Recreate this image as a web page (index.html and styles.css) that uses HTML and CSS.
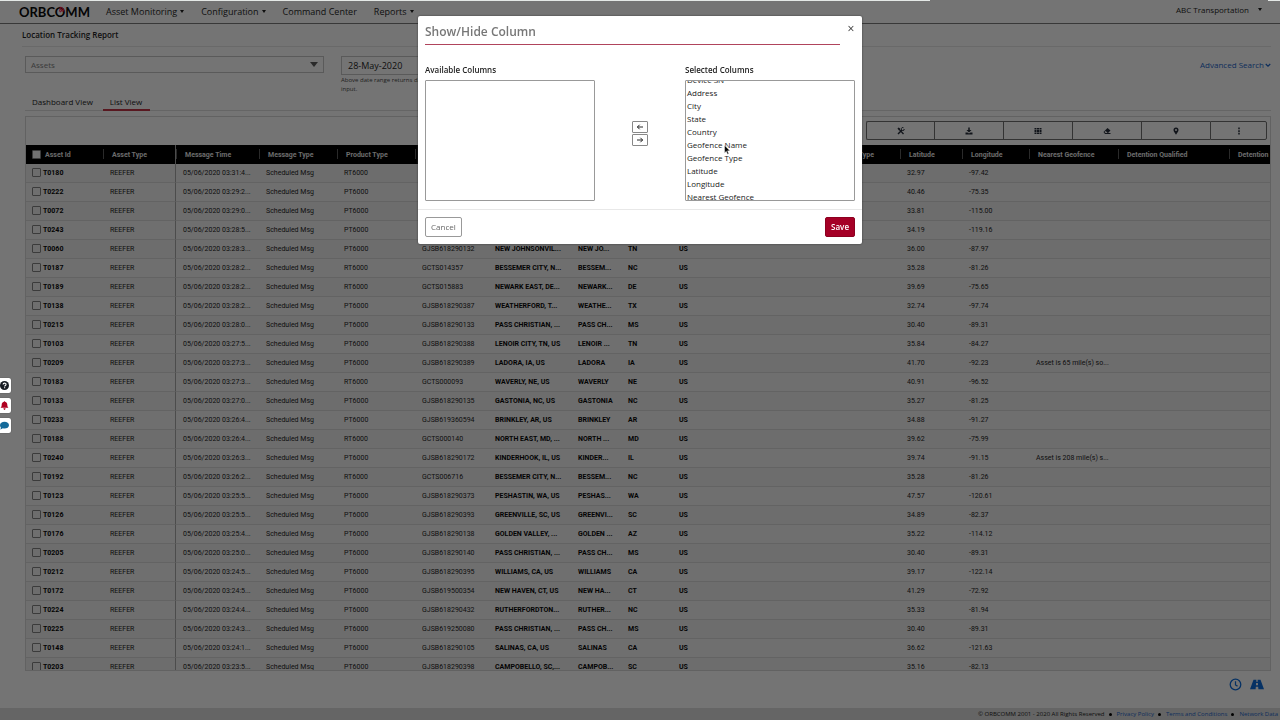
FILE: index.html
```html
<!DOCTYPE html>
<html lang="en">
<head>
<meta charset="utf-8">
<title>Location Tracking Report</title>
<link rel="stylesheet" href="styles.css">
</head>
<body>
<div class="app">
  <header class="topbar">
    <a class="logo" href="#">ORBC<span class="logo-o">O<svg class="logo-mark" viewBox="0 0 12 12"><path d="M5 3.500Q8.500 3.500 8.500 7M5 5.500Q6.500 5.500 6.500 7.500M5.500 1.500Q10.500 1.500 10.500 6.500" fill="none" stroke="#e0103a" stroke-width="1.400"/></svg></span>MM</a>
    <nav class="nav">
      <a href="#">Asset Monitoring<i class="caret"></i></a>
      <a href="#">Configuration<i class="caret"></i></a>
      <a href="#">Command Center</a>
      <a href="#">Reports<i class="caret"></i></a>
    </nav>
    <a class="account" href="#">ABC Transportation<i class="caret"></i></a>
  </header>

  <main class="main">
    <h1 class="title">Location Tracking Report</h1>
    <div class="filters">
      <button class="assets" type="button">Assets<i class="arrow"></i></button>
      <div class="date">
        <input class="date-input" type="text" value="28-May-2020" aria-label="Start date">
        <p class="hint">Above date range returns data without asset<br>input.</p>
      </div>
      <a class="advanced" href="#">Advanced Search<svg viewBox="0 0 8 6" width="6" height="5"><path d="M1 1l3 3 3-3" fill="none" stroke="currentColor" stroke-width="1.600"/></svg></a>
    </div>
    <div class="tabs">
      <a class="tab" href="#">Dashboard View</a>
      <a class="tab active" href="#">List View</a>
    </div>

    <section class="panel">
      <div class="tools">
        <button type="button" aria-label="Settings"><svg viewBox="0 0 16 16"><path d="M1 3l2-2 3 2v2l8 8-2 2-7-8H4z" fill="currentColor"/><path d="M2 14l8-8" stroke="currentColor" stroke-width="3"/><path d="M13 1.500A3 3 0 1 0 14.500 4" fill="none" stroke="currentColor" stroke-width="2"/></svg></button>
        <button type="button" aria-label="Download"><svg viewBox="0 0 16 16"><path d="M6.500 1h3v5H13l-5 5-5-5h3.500zM1 11h4l3 2 3-2h4v4H1z" fill="currentColor"/></svg></button>
        <button type="button" aria-label="Columns"><svg viewBox="0 0 16 16"><path d="M1 2h4v3H1zM6 2h4v3H6zM11 2h4v3h-4zM1 6h4v4H1zM6 6h4v4H6zM11 6h4v4h-4zM1 11h4v3H1zM6 11h4v3H6zM11 11h4v3h-4z" fill="currentColor"/></svg></button>
        <button type="button" aria-label="Clear"><svg viewBox="0 0 16 16"><path d="M9 2l6 5-5 5h5v2H4L1 10zM5 8l-2 2 2 2h3l1-1z" fill="currentColor" fill-rule="evenodd"/></svg></button>
        <button type="button" aria-label="Map"><svg viewBox="0 0 16 16"><path d="M8 1a5 5 0 0 1 5 5c0 3-3 6-5 9.500C6 12 3 9 3 6a5 5 0 0 1 5-5zm0 3a2 2 0 1 0 0 4 2 2 0 0 0 0-4z" fill="currentColor" fill-rule="evenodd"/></svg></button>
        <button type="button" aria-label="More"><svg viewBox="0 0 16 16"><path d="M6.500 1h3v3.500h-3zM6.500 6.300h3v3.500h-3zM6.500 11.600h3V15h-3z" fill="currentColor"/></svg></button>
      </div>
      <div class="grid-wrap">
        <table class="grid">
          <colgroup>
            <col class="w77"><col class="w73"><col class="w83"><col class="w78"><col class="w78"><col class="w73"><col class="w83"><col class="w50"><col class="w51"><col class="w68"><col class="w78"><col class="w82"><col class="w62"><col class="w67"><col class="w89"><col class="w111"><col class="w88">
          </colgroup>
          <thead>
            <tr><th><input class="check" type="checkbox" aria-label="Select all">Asset Id</th><th>Asset Type</th><th>Message Time</th><th>Message Type</th><th>Product Type</th><th>Device SN</th><th>Address</th><th>City</th><th>State</th><th>Country</th><th>Geofence Name</th><th>Geofence Type</th><th>Latitude</th><th>Longitude</th><th>Nearest Geofence</th><th>Detention Qualified</th><th>Detention</th></tr>
          </thead>
          <tbody id="rows"></tbody>
        </table>
      </div>
    </section>
    <div class="status">
      <svg viewBox="0 0 16 16" width="13" height="13"><circle cx="8" cy="8" r="6.500" fill="none" stroke="currentColor" stroke-width="1.600"/><path d="M8 4v4.500l2.500 1.500" fill="none" stroke="currentColor" stroke-width="1.500"/></svg>
      <svg viewBox="0 0 18 14" width="14" height="11"><path d="M4.500 1h3.700L8 3.500h2L9.800 1h3.700L18 13h-7.200l-.3-3h-3l-.3 3H0zM7.900 5l-.3 3h2.800l-.3-3z" fill="currentColor" fill-rule="evenodd"/></svg>
    </div>
  </main>

  <footer class="footer">
    <span>© ORBCOMM 2001 - 2020 All Rights Reserved</span><i class="dot"></i><a href="#">Privacy Policy</a><i class="dot"></i><a href="#">Terms and Conditions</a><i class="dot"></i><a href="#">Network Data</a>
  </footer>
</div>

<div class="backdrop">
  <div class="modal" role="dialog" aria-labelledby="modal-title">
    <div class="modal-head">
      <h2 class="modal-title" id="modal-title">Show/Hide Column</h2>
      <button class="close" type="button" aria-label="Close">×</button>
    </div>
    <div class="modal-body">
      <div class="field">
        <label for="available">Available Columns</label>
        <select class="list" id="available" multiple></select>
      </div>
      <div class="movers">
        <button type="button" aria-label="Move left"><svg viewBox="0 0 10 8" width="8" height="6"><path d="M9 4H1.500M4.500 1l-3 3 3 3" fill="none" stroke="currentColor" stroke-width="1.300"/></svg></button>
        <button type="button" aria-label="Move right"><svg viewBox="0 0 10 8" width="8" height="6"><path d="M1 4h7.500M5.500 1l3 3-3 3" fill="none" stroke="currentColor" stroke-width="1.300"/></svg></button>
      </div>
      <div class="field">
        <label for="selected">Selected Columns</label>
        <select class="list" id="selected" multiple>
          <option>Message Time</option><option>Message Type</option><option>Product Type</option><option>Device SN</option><option>Address</option><option>City</option><option>State</option><option>Country</option><option>Geofence Name</option><option>Geofence Type</option><option>Latitude</option><option>Longitude</option><option>Nearest Geofence</option><option>Detention Qualified</option><option>Detention Hours</option>
        </select>
      </div>
    </div>
    <div class="modal-foot">
      <button class="btn" type="button">Cancel</button>
      <button class="btn primary" type="button">Save</button>
    </div>
    <svg class="pointer" viewBox="0 0 8 12" width="7" height="10"><path d="M.5.5v9l2-2L4 11l1.500-.6L4 7h3z" fill="#000" stroke="#fff" stroke-width=".5"/></svg>
  </div>
</div>

<div class="strip"></div>
<div class="side">
  <button type="button" aria-label="Help"><svg viewBox="0 0 16 16" width="9" height="9"><circle cx="8" cy="8" r="8" fill="#161b22"/><path d="M5.500 6.200C5.500 3 10.700 3 10.700 6c0 2-2.500 1.800-2.500 3.800M8.200 11v2" fill="none" stroke="#fff" stroke-width="2"/></svg></button>
  <button type="button" aria-label="Alerts"><svg viewBox="0 0 16 16" width="9" height="9"><path d="M8 0l1 1.500c3 .6 4 3 4 5.500 0 3 1 4 2 5H1c1-1 2-2 2-5 0-2.500 1-4.900 4-5.500zM6 13h4q-.5 3-2 3t-2-3z" fill="#b00020"/></svg></button>
  <button type="button" aria-label="Chat"><svg viewBox="0 0 16 16" width="9" height="9"><path d="M8 1.500c4.500 0 8 2.600 8 6s-3.500 6-8 6q-1.500 0-3-.5Q3 15 0 15q2-2 1.500-3.500Q0 10 0 7.500c0-3.400 3.500-6 8-6z" fill="#146a9a"/></svg></button>
</div>
<script src="app.js"></script>
</body>
</html>
```
FILE: styles.css
```css
* { box-sizing: border-box; }
body { margin: 0; background: #e8e8e8; color: #1c1c1c; font: 8px/12px "Open Sans", "Noto Sans", sans-serif; overflow: hidden; }
a { color: inherit; text-decoration: none; }
button, input, select { font: inherit; color: inherit; margin: 0; }
h1, h2, p { margin: 0; font-weight: 400; }
svg { display: block; }

.app { display: flex; flex-direction: column; height: 100vh; }

.topbar { display: flex; align-items: center; height: 24px; padding: 0 18px 0 19px; border-bottom: 1px solid #707070; }
.logo { font: 700 13px/16px Lato, sans-serif; color: #080808; width: 87px; }
.logo-o { position: relative; }
.logo-mark { position: absolute; left: 0; top: 2px; width: 10px; height: 10px; }
.nav { display: flex; gap: 17px; flex: 1; font-size: 9px; }
.caret { display: inline-block; border: 2px solid transparent; border-top: 3px solid currentColor; border-bottom: 0; margin-left: 3px; vertical-align: 2px; }
.account .caret { margin-left: 9px; }
.account { padding-bottom: 3px; }

.main { flex: 1; min-height: 0; display: flex; flex-direction: column; padding: 0 9px 0 25px; }
.title { font-size: 8px; line-height: 22px; height: 23px; margin: 0 0 9px -3px; font-weight: 600; border-bottom: 1px solid #d2d2d2; }
.filters { display: flex; align-items: flex-start; gap: 17px; height: 38px; }
.assets { display: flex; align-items: center; justify-content: space-between; width: 299px; height: 17px; padding: 0 5px; background: none; border: 1px solid #b4b4b4; color: #777; }
.arrow { border: 4px solid transparent; border-top: 5px solid #555; border-bottom: 0; }
.date { width: 220px; }
.date-input { display: block; width: 100%; height: 19px; padding: 0 6px; background: none; border: 1px solid #b4b4b4; font-size: 9px; }
.hint { font-size: 6px; line-height: 9px; color: #444; margin-top: 1px; }
.advanced { display: flex; align-items: center; gap: 1px; margin: 3px 0 0 auto; color: #1a5cb8; }
.tabs { display: flex; flex: none; height: 17px; border-bottom: 1px solid #cacaca; }
.tab { padding: 2px 8px 0 7px; height: 17px; }
.tab + .tab { margin-left: 2px; }
.active { border-bottom: 2px solid #b03040; }

.panel { flex: 1; min-height: 0; display: flex; flex-direction: column; margin-top: 5px; border: 1px solid #c4c4c4; }
.tools { display: flex; justify-content: flex-end; padding: 4px 3px 5px; flex: none; }
.tools button { display: flex; align-items: center; justify-content: center; width: 69px; height: 19px; padding: 0; background: none; border: 1px solid #666; border-right: 0; color: #222834; }
.tools button:last-child { width: 57px; border-right: 1px solid #666; border-radius: 0 2px 2px 0; }
.tools button:first-child { width: 68px; border-radius: 2px 0 0 2px; }
.tools svg { width: 8px; height: 8px; }

.grid-wrap { flex: 1; min-height: 0; overflow: hidden; }
.grid { width: 1291px; table-layout: fixed; border-collapse: separate; border-spacing: 0; font: 7px/12px Roboto, sans-serif; color: #222; }
.grid th { height: 19px; padding: 0 0 0 9px; background: #000; color: #d6d6d6; text-align: left; font-weight: 700; white-space: nowrap; background-image: linear-gradient(#555, #555); background-size: 1px 10px; background-position: 0 4px; background-repeat: no-repeat; }
.grid td { height: 19px; padding: 0 7px; border-bottom: 1px solid #c6c6c6; background: #dadada; white-space: nowrap; overflow: hidden; text-overflow: ellipsis; }
.grid tr:nth-child(even) td { background: #dedede; }
.grid th:first-child, .grid td:first-child { padding-left: 6px; background-image: none; }
.grid th:nth-child(2), .grid td:nth-child(2) { border-right: 1px solid #999; }
.grid .strong { color: #080808; font-weight: 700; }
.grid td:first-child { color: #080808; font-weight: 700; }
.check { appearance: none; width: 9px; height: 9px; border: 1px solid #777; border-radius: 1px; vertical-align: -2px; margin-right: 2px; }
.grid th .check { background: #e2e2e2; margin-right: 4px; }
.w50 { width: 50px; } .w51 { width: 51px; } .w62 { width: 62px; } .w67 { width: 67px; } .w68 { width: 68px; }
.w73 { width: 73px; } .w77 { width: 77px; } .w78 { width: 78px; } .w82 { width: 82px; } .w83 { width: 83px; }
.w88 { width: 88px; } .w89 { width: 89px; } .w111 { width: 111px; }

.status { flex: none; display: flex; align-items: center; justify-content: flex-end; gap: 8px; height: 37px; padding: 0 7px 11px 0; color: #0a62c8; }
.footer { flex: none; display: flex; align-items: center; justify-content: flex-end; height: 12px; background: #cacaca; font-size: 6px; line-height: 12px; padding-right: 2px; white-space: nowrap; }
.footer a { color: #1a5cb8; }
.dot { width: 3px; height: 3px; border-radius: 50%; background: #000; margin: 1px 5px 0 4px; }

.backdrop { position: fixed; inset: 0; display: flex; justify-content: center; align-items: flex-start; padding-top: 16px; background: rgba(0, 0, 0, 0.5); }
.modal { position: relative; width: 444px; background: #fff; border-radius: 2px; box-shadow: 0 0 2px #333; color: #222; }
.modal-head { display: flex; justify-content: space-between; padding: 7px 7px 0; height: 47px; }
.modal-title { width: 415px; height: 22px; font-size: 12px; line-height: 18px; font-weight: 600; color: #777; border-bottom: 1px solid #b0445c; }
.close { width: 8px; height: 12px; padding: 0; border: 0; background: none; font-size: 12px; line-height: 12px; color: #333; }
.modal-body { display: flex; justify-content: space-between; padding: 1px 7px 8px; border-bottom: 1px solid #e8e8e8; }
.field { display: flex; flex-direction: column; width: 170px; }
.field label { height: 16px; line-height: 12px; font-weight: 600; }
.list { height: 121px; width: 100%; padding: 0; border: 1px solid #999; border-radius: 1px; background: #fff; scrollbar-width: none; outline: 0; }
.list option { height: 13px; min-height: 13px; line-height: 13px; padding: 0 1px; }
.movers { display: flex; flex-direction: column; gap: 1px; padding-top: 57px; }
.movers button { display: flex; align-items: center; justify-content: center; width: 16px; height: 12px; padding: 0; background: #fff; border: 1px solid #888; border-radius: 1px; }
.modal-foot { display: flex; justify-content: space-between; padding: 7px; }
.btn { height: 20px; padding: 0 5px; border: 1px solid #999; border-radius: 2px; background: #fff; color: #666; }
.primary { border-color: #8c0020; background: #a50026; color: #fff; font-weight: 600; }
.pointer { position: absolute; left: 306px; top: 129px; }

.strip { position: fixed; top: 0; left: 0; right: 0; height: 1px; background: linear-gradient(90deg, #e4e8e6 0 930px, transparent 930px calc(100% - 12px), #e4e8e6 calc(100% - 12px)); }
.side { position: fixed; left: 0; top: 378px; display: flex; flex-direction: column; gap: 5px; }
.side button { width: 11px; height: 15px; padding: 0; border: 0; background: #fff; border-radius: 0 2px 2px 0; box-shadow: 0 0 1px #222; }
```
FILE: app.js
```js
// id, time, product, serial, address, city, state, latitude, longitude, nearest geofence
const assets = `T0180|31:4|RT6000|||||32.97|-97.42|
T0222|29:2|PT6000|||||40.46|-75.35|
T0072|29:0|PT6000|||||33.81|-115.00|
T0243|28:5|PT6000|||||34.19|-119.16|
T0060|28:3|PT6000|GJSB618290132|NEW JOHNSONVIL...|NEW JO...|TN|36.00|-87.97|
T0187|28:2|RT6000|GCTS014357|BESSEMER CITY, N...|BESSEM...|NC|35.28|-81.26|
T0189|28:2|RT6000|GCTS015883|NEWARK EAST, DE...|NEWARK...|DE|39.69|-75.65|
T0138|28:2|PT6000|GJSB618290387|WEATHERFORD, T...|WEATHE...|TX|32.74|-97.74|
T0215|28:0|PT6000|GJSB618290133|PASS CHRISTIAN, ...|PASS CH...|MS|30.40|-89.31|
T0103|27:5|PT6000|GJSB618290388|LENOIR CITY, TN, US|LENOIR ...|TN|35.84|-84.27|
T0209|27:3|PT6000|GJSB618290389|LADORA, IA, US|LADORA|IA|41.70|-92.23|Asset is 65 mile(s) so...
T0183|27:3|RT6000|GCTS000093|WAVERLY, NE, US|WAVERLY|NE|40.91|-96.52|
T0133|27:0|PT6000|GJSB618290135|GASTONIA, NC, US|GASTONIA|NC|35.27|-81.25|
T0233|26:4|PT6000|GJSB619360594|BRINKLEY, AR, US|BRINKLEY|AR|34.88|-91.27|
T0188|26:4|RT6000|GCTS000140|NORTH EAST, MD, ...|NORTH ...|MD|39.62|-75.99|
T0240|26:3|PT6000|GJSB618290172|KINDERHOOK, IL, US|KINDER...|IL|39.74|-91.15|Asset is 208 mile(s) s...
T0192|26:2|RT6000|GCTS006716|BESSEMER CITY, N...|BESSEM...|NC|35.28|-81.26|
T0123|25:5|PT6000|GJSB618290373|PESHASTIN, WA, US|PESHAS...|WA|47.57|-120.61|
T0126|25:5|PT6000|GJSB618290393|GREENVILLE, SC, US|GREENVI...|SC|34.89|-82.37|
T0176|25:4|PT6000|GJSB618290138|GOLDEN VALLEY, ...|GOLDEN ...|AZ|35.22|-114.12|
T0205|25:0|PT6000|GJSB618290140|PASS CHRISTIAN, ...|PASS CH...|MS|30.40|-89.31|
T0212|24:5|PT6000|GJSB618290395|WILLIAMS, CA, US|WILLIAMS|CA|39.17|-122.14|
T0172|24:5|PT6000|GJSB619500354|NEW HAVEN, CT, US|NEW HA...|CT|41.29|-72.92|
T0224|24:4|PT6000|GJSB618290432|RUTHERFORDTON...|RUTHER...|NC|35.33|-81.94|
T0225|24:3|PT6000|GJSB619250080|PASS CHRISTIAN, ...|PASS CH...|MS|30.40|-89.31|
T0148|24:1|PT6000|GJSB618290105|SALINAS, CA, US|SALINAS|CA|36.62|-121.63|
T0203|23:5|PT6000|GJSB618290398|CAMPOBELLO, SC,...|CAMPOB...|SC|35.16|-82.13|`;

const body = document.getElementById("rows");
assets.split("\n").forEach((line) => {
  const [id, time, product, serial, address, city, state, lat, lon, near] = line.split("|");
  const row = body.insertRow();
  const first = row.insertCell();
  const label = document.createElement("label");
  const check = document.createElement("input");
  check.type = "checkbox";
  check.className = "check";
  label.append(check, id);
  first.append(label);
  const country = state ? "US" : "";
  const cells = ["REEFER", "05/06/2020 03:" + time + "...", "Scheduled Msg", product, serial,
    address, city, state, country, "", "", lat, lon, near, "", ""];
  cells.forEach((text, i) => {
    const cell = row.insertCell();
    cell.textContent = text;
    if (i >= 5 && i <= 8) cell.className = "strong";
  });
});

document.getElementById("selected").scrollTop = 46;
```
